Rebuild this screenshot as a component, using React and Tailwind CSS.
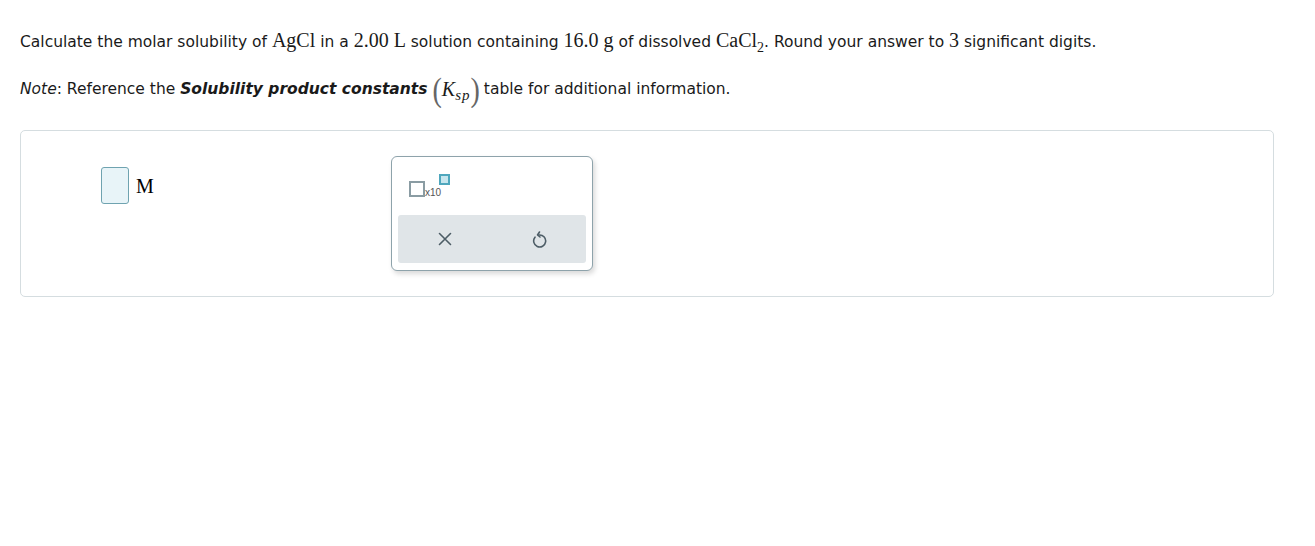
import React from "react";

const serif = { fontFamily: '"Liberation Serif", "Times New Roman", serif' };

export default function App() {
  return (
    <div className="w-[1315px] h-[546px] bg-white px-[20px] pt-[28px]" style={{ fontFamily: '"DejaVu Sans", Verdana, sans-serif' }}>
      <p className="h-[24px] text-[15.5px] leading-[24px] text-[#1a1a1a] whitespace-nowrap">
        Calculate the molar solubility of <span className="text-[20px]" style={serif}>AgCl</span> in a{" "}
        <span className="text-[20px]" style={serif}>2.00 L</span> solution containing{" "}
        <span className="text-[20px]" style={serif}>16.0 g</span> of dissolved{" "}
        <span className="text-[20px]" style={serif}>CaCl<sub className="text-[14px] relative top-[5px]">2</sub></span>. Round your answer to{" "}
        <span className="text-[20px]" style={serif}>3</span> significant digits.
      </p>
      <p className="mt-[25px] h-[24px] text-[15.5px] leading-[24px] text-[#1a1a1a] flex items-center whitespace-nowrap">
        <span>
          <i>Note</i>: Reference the <b><i>Solubility product constants</i></b>
        </span>
        <span className="inline-flex items-center ml-[5px] mr-[4px] h-[24px]" style={serif}>
          <span className="text-[28px] font-light leading-[24px] text-[#666] relative top-[1px] scale-y-[1.2] inline-block">(</span>
          <span className="text-[20px] italic leading-[24px]">K</span>
          <span className="text-[15px] italic leading-[24px] relative top-[6px] tracking-[1px]">sp</span>
          <span className="text-[28px] font-light leading-[24px] text-[#666] relative top-[1px] scale-y-[1.2] inline-block">)</span>
        </span>
        <span>table for additional information.</span>
      </p>

      <div className="mt-[29px] w-[1254px] h-[167px] border border-[#d5dde0] rounded-[5px] flex">
        <div className="w-[370px] pl-[80px] pt-[36px] flex items-start">
          <div className="w-[28px] h-[37px] border border-[#6fa3b0] rounded-[3px] bg-[#e8f4f8]" />
          <span className="ml-[7px] mt-[4px] text-[20px]" style={serif}>M</span>
        </div>
        <div className="mt-[25px] w-[202px] h-[115px] border border-[#8ea3ab] rounded-[6px] bg-white shadow-[2px_3px_5px_rgba(0,0,0,0.15)] flex flex-col">
          <div className="h-[58px] pl-[17px] pt-[17px] flex items-start">
            <div className="mt-[7px] w-[16px] h-[16px] border-2 border-[#8a9ca3]" />
            <span className="mt-[14px] text-[10px] leading-none text-[#555]" style={{ fontFamily: '"Liberation Sans", Arial, sans-serif' }}>x10</span>
            <div className="w-[11px] h-[11px] border-2 border-[#4fa7bd] bg-[#c7e6ee] -ml-[2px]" />
          </div>
          <div className="mx-[6px] h-[48px] rounded-[3px] bg-[#e0e5e8] flex items-center justify-around">
            <svg width="16" height="16" viewBox="0 0 16 16" fill="none" stroke="#4d5d66" strokeWidth="1.6" strokeLinecap="round">
              <path d="M2.5 2.5L13.5 13.5M13.5 2.5L2.5 13.5" />
            </svg>
            <svg width="16" height="18" viewBox="0 0 16 18" fill="none" stroke="#4d5d66" strokeWidth="1.6" strokeLinecap="round" strokeLinejoin="round">
              <path d="M4 7.2A6 6 0 1 0 8 5" />
              <path d="M8.5 2L6.5 5L9 7" />
            </svg>
          </div>
        </div>
      </div>
    </div>
  );
}
